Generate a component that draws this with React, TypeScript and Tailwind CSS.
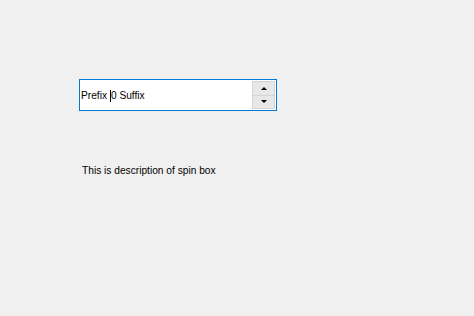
import { useState } from "react";

function SpinBox({ prefix, suffix }: { prefix: string; suffix: string }) {
    const [value, setValue] = useState(0);

    return (
        <div className="flex h-[32px] w-[198px] border border-[#0078d7] bg-white">
            <div className="flex flex-1 items-center pl-[1px] pt-[1px] text-[10.2px] leading-[12px] text-black">
                <span>{prefix}&nbsp;</span>
                <span className="inline-block h-[12px] w-px bg-black" />
                <span>{value}</span>
                <span>&nbsp;{suffix}</span>
            </div>
            <div className="my-[1px] mr-[1px] flex w-[23px] flex-col">
                <button
                    className="flex flex-1 items-center justify-center border border-[#d4d4d4] bg-[#e8e8e8]"
                    onClick={() => setValue((v) => v + 1)}
                >
                    <svg width="6" height="3" viewBox="0 0 6 3">
                        <path d="M3 0 L6 3 L0 3 Z" fill="#000" />
                    </svg>
                </button>
                <button
                    className="flex flex-1 items-center justify-center border border-t-0 border-[#d4d4d4] bg-[#e8e8e8]"
                    onClick={() => setValue((v) => v - 1)}
                >
                    <svg width="6" height="3" viewBox="0 0 6 3">
                        <path d="M0 0 L6 0 L3 3 Z" fill="#000" />
                    </svg>
                </button>
            </div>
        </div>
    );
}

export default function App() {
    return (
        <div
            className="flex h-[316px] w-[474px] flex-col bg-[#f0f0f0] pl-[79px] pt-[79px]"
            style={{ fontFamily: '"Liberation Sans", Arial, sans-serif' }}
        >
            <SpinBox prefix="Prefix" suffix="Suffix" />
            <p className="mt-[54px] pl-[3px] text-[10.2px] leading-[12px] text-black">
                This is description of spin box
            </p>
        </div>
    );
}
